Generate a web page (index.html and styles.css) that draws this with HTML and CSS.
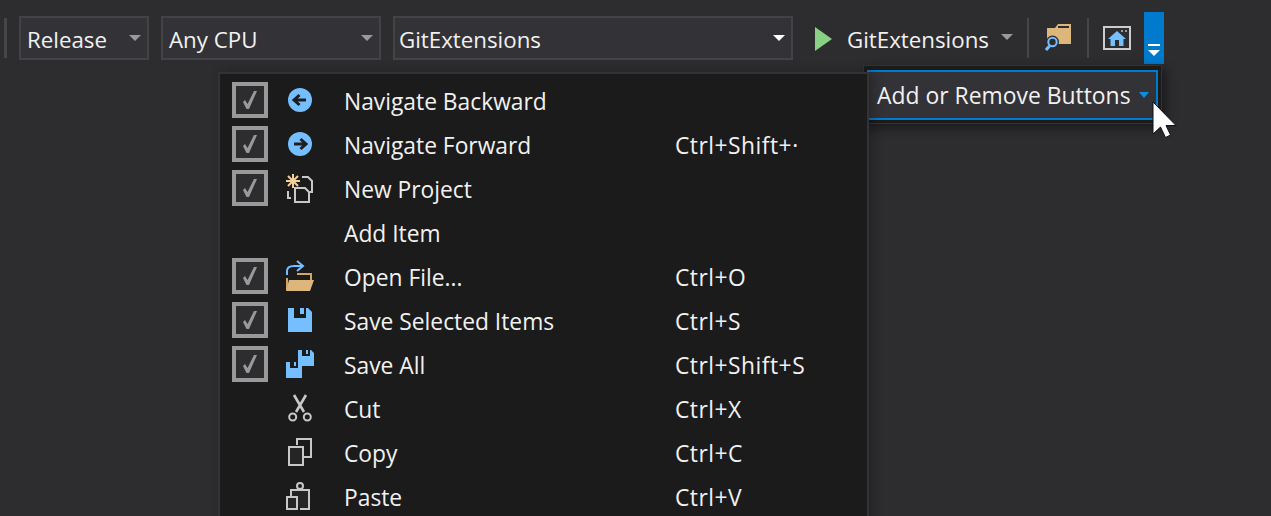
FILE: index.html
```html
<!DOCTYPE html>
<html lang="en">
<head>
<meta charset="utf-8">
<title>Toolbar customisation menu</title>
<link rel="stylesheet" href="styles.css">
</head>
<body>
<div class="toolbar">
  <span class="grip"></span>
  <div class="combo combo-release"><span>Release</span><i class="caret"></i></div>
  <div class="combo combo-cpu"><span>Any CPU</span><i class="caret"></i></div>
  <div class="combo combo-project"><span>GitExtensions</span><i class="caret caret-white"></i></div>
  <svg class="play" width="18" height="24" viewBox="0 0 18 24"><path d="M0 0L17 12L0 24Z" fill="#89d185"/></svg>
  <span class="run-label">GitExtensions</span>
  <i class="caret caret-run"></i>
  <span class="sep sep-a"></span>
  <svg class="tool-folder" width="28" height="28" viewBox="0 0 28 28">
    <path d="M2 5H10L13 1H26V21H2Z" fill="#dcb67a"/>
    <rect x="13" y="3" width="11" height="2" fill="#2d2d30"/>
    <circle cx="7.500" cy="19" r="6.500" fill="#2d2d30"/>
    <circle cx="7.500" cy="19" r="4.200" fill="#2d2d30" stroke="#75beff" stroke-width="2"/>
    <path d="M1 27L4.500 23" stroke="#75beff" stroke-width="3"/>
  </svg>
  <span class="sep sep-b"></span>
  <svg class="tool-home" width="28" height="24" viewBox="0 0 28 24">
    <rect x="1" y="1" width="26" height="22" fill="none" stroke="#cccccc" stroke-width="2"/>
    <path d="M14 5L23 13H20.500V20H7.500V13H5Z" fill="#75beff"/>
    <rect x="12" y="14" width="4" height="6" fill="#2d2d30"/>
    <rect x="18" y="4" width="2" height="2" fill="#999"/>
    <rect x="22" y="4" width="2" height="2" fill="#999"/>
  </svg>
  <div class="overflow"><span class="overflow-bar"></span><i class="overflow-tri"></i></div>
</div>

<div class="popup">
  <div class="popup-item"><span>Add or Remove Buttons</span><i class="caret caret-blue"></i></div>
</div>

<div class="menu">
  <div class="row">
    <span class="check"><svg class="tick" viewBox="0 0 28 28"><path d="M7 16L9 14L11.500 18L18 5H21L13 23H10.500Z"/></svg></span>
    <svg class="ico" viewBox="0 0 36 36"><circle cx="18" cy="17" r="12" fill="#75beff"/><path d="M24 17H13M17.500 12L12 17L17.500 22" fill="none" stroke="#1e1e1e" stroke-width="3"/></svg>
    <span class="label">Navigate Backward</span><span class="key"></span>
  </div>
  <div class="row">
    <span class="check"><svg class="tick" viewBox="0 0 28 28"><path d="M7 16L9 14L11.500 18L18 5H21L13 23H10.500Z"/></svg></span>
    <svg class="ico" viewBox="0 0 36 36"><circle cx="18" cy="17" r="12" fill="#75beff"/><path d="M12 17H23M18.500 12L24 17L18.500 22" fill="none" stroke="#1e1e1e" stroke-width="3"/></svg>
    <span class="label">Navigate Forward</span><span class="key">Ctrl+Shift+·</span>
  </div>
  <div class="row">
    <span class="check"><svg class="tick" viewBox="0 0 28 28"><path d="M7 16L9 14L11.500 18L18 5H21L13 23H10.500Z"/></svg></span>
    <svg class="ico" viewBox="0 0 36 36">
      <path d="M20 6H26L30 10V21H28" fill="none" stroke="#c8c8c8" stroke-width="2"/>
      <path d="M13 17H23L27 21V31H13Z" fill="#1b1b1c" stroke="#c8c8c8" stroke-width="2"/>
      <path d="M6 20V27H9" fill="none" stroke="#c8c8c8" stroke-width="2"/>
      <path d="M11 3V17M4 10H18M6 5L16 15M16 5L6 15" stroke="#f5cf9a" stroke-width="2"/>
    </svg>
    <span class="label">New Project</span><span class="key"></span>
  </div>
  <div class="row">
    <span class="check check-off"></span><span class="ico"></span>
    <span class="label">Add Item</span><span class="key"></span>
  </div>
  <div class="row">
    <span class="check"><svg class="tick" viewBox="0 0 28 28"><path d="M7 16L9 14L11.500 18L18 5H21L13 23H10.500Z"/></svg></span>
    <svg class="ico" viewBox="0 0 36 36">
      <path d="M5 31V19M15 15H29V21" fill="none" stroke="#d0a565" stroke-width="2"/>
      <path d="M7 21H32L28 32H4Z" fill="#dcb67a"/>
      <path d="M5 16V12C5 8 8 7 12 7H20M15 2L21 7L15 12" fill="none" stroke="#75beff" stroke-width="2"/>
    </svg>
    <span class="label">Open File...</span><span class="key">Ctrl+O</span>
  </div>
  <div class="row">
    <span class="check"><svg class="tick" viewBox="0 0 28 28"><path d="M7 16L9 14L11.500 18L18 5H21L13 23H10.500Z"/></svg></span>
    <svg class="ico" viewBox="0 0 36 36">
      <path d="M6 5H26L30 9V29H6Z" fill="#75beff"/>
      <path d="M12 5H24V15H12Z" fill="#1b1b1c"/>
      <rect x="18" y="5" width="4" height="6" fill="#75beff"/>
    </svg>
    <span class="label">Save Selected Items</span><span class="key">Ctrl+S</span>
  </div>
  <div class="row">
    <span class="check"><svg class="tick" viewBox="0 0 28 28"><path d="M7 16L9 14L11.500 18L18 5H21L13 23H10.500Z"/></svg></span>
    <svg class="ico" viewBox="0 0 36 36">
      <path d="M16 3H29L32 6V19H20V15H16Z" fill="#75beff"/>
      <path d="M20 3H28V9H20Z" fill="#1b1b1c"/><rect x="24" y="3" width="2" height="4" fill="#75beff"/>
      <path d="M4 15H20V31H4Z" fill="#75beff"/>
      <path d="M8 15H16V21H8Z" fill="#1b1b1c"/><rect x="12" y="15" width="2" height="4" fill="#75beff"/>
    </svg>
    <span class="label">Save All</span><span class="key">Ctrl+Shift+S</span>
  </div>
  <div class="row">
    <span class="check check-off"></span>
    <svg class="ico" viewBox="0 0 36 36" fill="none" stroke="#c8c8c8">
      <path d="M12 4L22 21M24 4L14 21" stroke-width="2.600"/>
      <circle cx="10.700" cy="26" r="3.500" stroke-width="2"/>
      <circle cx="25.300" cy="26" r="3.500" stroke-width="2"/>
    </svg>
    <span class="label">Cut</span><span class="key">Ctrl+X</span>
  </div>
  <div class="row">
    <span class="check check-off"></span>
    <svg class="ico" viewBox="0 0 36 36" stroke="#c8c8c8" stroke-width="2">
      <path d="M15 10V4H29V22H22" fill="none"/>
      <rect x="7" y="12" width="14" height="18" fill="#252526"/>
    </svg>
    <span class="label">Copy</span><span class="key">Ctrl+C</span>
  </div>
  <div class="row">
    <span class="check check-off"></span>
    <svg class="ico" viewBox="0 0 36 36" stroke="#c8c8c8" stroke-width="2">
      <path d="M9 17V11H27V30H18" fill="#252526"/>
      <circle cx="18" cy="7" r="3" fill="none"/>
      <rect x="5" y="18" width="10" height="12" fill="#252526"/>
    </svg>
    <span class="label">Paste</span><span class="key">Ctrl+V</span>
  </div>
</div>

<svg class="cursor" width="26" height="38" viewBox="0 0 26 38">
  <path d="M1 1V33L8.500 26L13.500 36.500L18.500 34L14 24.500H24Z" fill="#fff" stroke="#111" stroke-width="1"/>
</svg>
</body>
</html>
```
FILE: styles.css
```css
* { box-sizing: border-box; }
html, body { margin: 0; padding: 0; }
body {
  width: 1271px;
  height: 516px;
  overflow: hidden;
  position: relative;
  background: #2d2d30;
  color: #f1f1f1;
  font-family: "Open Sans", "Noto Sans", sans-serif;
  font-size: 22.3px;
}
.toolbar {
  display: flex;
  align-items: flex-start;
  height: 64px;
  padding: 12px 0 0 4px;
}
.grip {
  width: 3px;
  height: 40px;
  margin: 6px 12px 0 0;
  background: #46464a;
}
.combo {
  display: flex;
  align-items: center;
  justify-content: space-between;
  height: 44px;
  margin-top: 4px;
  padding: 2px 6px 0 6px;
  background: #333337;
  border: 2px solid #434346;
}
.combo-release { width: 130px; margin-right: 12px; }
.combo-cpu { width: 220px; margin-right: 12px; }
.combo-project { width: 400px; margin-right: 22px; padding-left: 4px; }
.caret {
  display: block;
  width: 0;
  height: 0;
  border-left: 6px solid transparent;
  border-right: 6px solid transparent;
  border-top: 6px solid #999999;
}
.combo .caret { margin-top: -2px; }
.caret-white { border-top-color: #ffffff; }
.play { margin: 15px 14px 0 0; }
.run-label { width: 142px; line-height: 44px; margin-top: 6px; white-space: nowrap; }
.caret-run { margin: 22px 14px 0 12px; }
.sep { width: 2px; height: 40px; margin-top: 6px; background: #46464a; }
.tool-folder { margin: 11px 14px 0 16px; }
.tool-home { margin: 14px 13px 0 14px; }
.overflow {
  display: flex;
  flex-direction: column;
  align-items: center;
  width: 20px;
  height: 52px;
  padding-top: 32px;
  background: #007acc;
}
.overflow-bar { width: 12px; height: 2px; background: #fff; }
.overflow-tri {
  width: 0;
  height: 0;
  margin-top: 4px;
  border-left: 6px solid transparent;
  border-right: 6px solid transparent;
  border-top: 6px solid #fff;
}
.menu {
  position: absolute;
  left: 218px;
  top: 72px;
  width: 651px;
  height: 460px;
  padding: 5px 0 0 12px;
  background: #1b1b1c;
  border: 2px solid #333337;
  border-bottom: 0;
  font-size: 22.8px;
  box-shadow: 4px 0 10px rgba(0, 0, 0, 0.25);
}
.row {
  display: grid;
  grid-template-columns: 36px 50px 331px 1fr;
  align-items: center;
  height: 44px;
}
.check {
  display: block;
  width: 36px;
  height: 36px;
  margin-top: -2px;
  background: #2d2d30;
  border: 4px solid #999999;
}
.tick { display: block; width: 28px; height: 28px; fill: #999999; }
.check-off { visibility: hidden; }
.ico { display: block; width: 36px; height: 36px; margin-left: 14px; }
.label { margin-left: 26px; white-space: nowrap; }
.key { margin-left: 26px; letter-spacing: 0.5px; white-space: nowrap; }
.popup {
  position: absolute;
  left: 863px;
  top: 65px;
  width: 299px;
  height: 59px;
  padding: 4px 3px 3px 3px;
  background: #1b1b1c;
  border: 1px solid #333337;
  font-size: 22.9px;
  box-shadow: 4px 4px 10px rgba(0, 0, 0, 0.45);
}
.popup-item {
  display: flex;
  align-items: center;
  height: 50px;
  padding-left: 8px;
  background: #333337;
  border: 2px solid #007acc;
}
.caret-blue {
  margin-left: 8px;
  border-top-color: #0e8ee0;
  border-left-width: 5px;
  border-right-width: 5px;
  border-top-width: 6px;
}
.cursor { position: absolute; left: 1152px; top: 101px; }
```
